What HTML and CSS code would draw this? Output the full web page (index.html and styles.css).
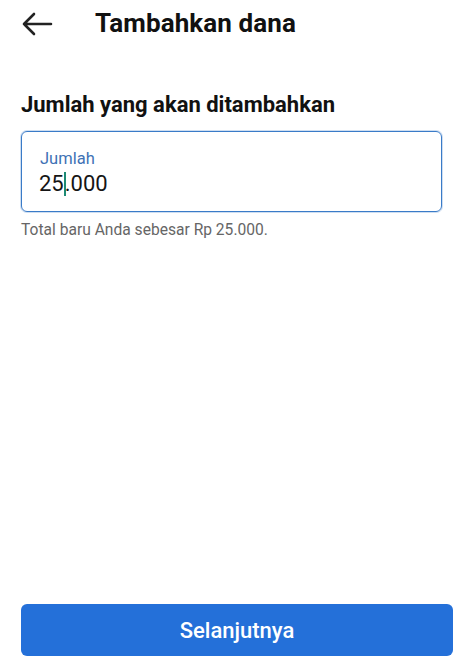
FILE: index.html
```html
<!DOCTYPE html>
<html>
  <head>
    <meta charset="UTF-8" />
    <meta name="viewport" content="width=device-width, initial-scale=1.0" />
    <title>Tambahkan dana</title>
    <link rel="stylesheet" href="styles.css">
  </head>
  <body>
    <div class="page">
      <header class="topbar">
        <svg class="back" width="32" height="24" viewBox="0 0 32 24">
          <path d="M30 12 H3 M13 2 L3 12 L13 22" fill="none" stroke="#222" stroke-width="2.6" stroke-linecap="round" stroke-linejoin="round" />
        </svg>
        <h1 class="title">Tambahkan dana</h1>
      </header>

      <main class="content">
        <h2 class="section">Jumlah yang akan ditambahkan</h2>
        <div class="field">
          <div class="field-label">Jumlah</div>
          <div class="field-value">25<span class="caret"></span>.000</div>
        </div>
        <p class="hint">Total baru Anda sebesar Rp 25.000.</p>
      </main>

      <div class="footer">
        <button class="next">Selanjutnya</button>
      </div>
    </div>
  </body>
</html>
```

FILE: styles.css
```css
html,
body {
  margin: 0;
  padding: 0;
  background: #fff;
  font-family: Roboto, "Liberation Sans", sans-serif;
  color: #111;
}

.page {
  height: 671px;
  display: flex;
  flex-direction: column;
}

.topbar {
  display: flex;
  align-items: center;
  height: 46px;
  padding: 0 0 0 21px;
}
.back {
  display: block;
  margin-top: 2px;
}
.title {
  margin: 0 0 0 42px;
  font-size: 26px;
  font-weight: 700;
  letter-spacing: 0.1px;
}

.content {
  flex: 1;
  padding: 0 21px;
}
.section {
  margin: 44px 0 11px;
  font-size: 22px;
  font-weight: 700;
  line-height: 30px;
}
.field {
  border: 1.5px solid #3a7bc8;
  border-radius: 6px;
  box-shadow: 0 0 0 1px rgba(58, 123, 200, 0.25);
  height: 81px;
  box-sizing: border-box;
  width: 421px;
  padding: 17px 18px 0;
}
.field-label {
  color: #3f72b5;
  font-size: 16.5px;
  line-height: 20px;
}
.field-value {
  font-size: 22px;
  line-height: 30px;
  color: #151515;
  margin-left: -1px;
}
.caret {
  display: inline-block;
  width: 2px;
  height: 24px;
  background: #1d8a74;
  vertical-align: -5px;
  margin: 0 -1px 0 0;
}
.hint {
  margin: 8px 0 0;
  font-size: 15.6px;
  line-height: 20px;
  color: #666;
}

.footer {
  padding: 0 21px 15px;
}
.next {
  display: block;
  width: 432px;
  height: 52px;
  border: none;
  border-radius: 6px;
  background: #2470d9;
  color: #fff;
  font-family: Roboto, "Liberation Sans", sans-serif;
  font-size: 22px;
  font-weight: 500;
}
```
